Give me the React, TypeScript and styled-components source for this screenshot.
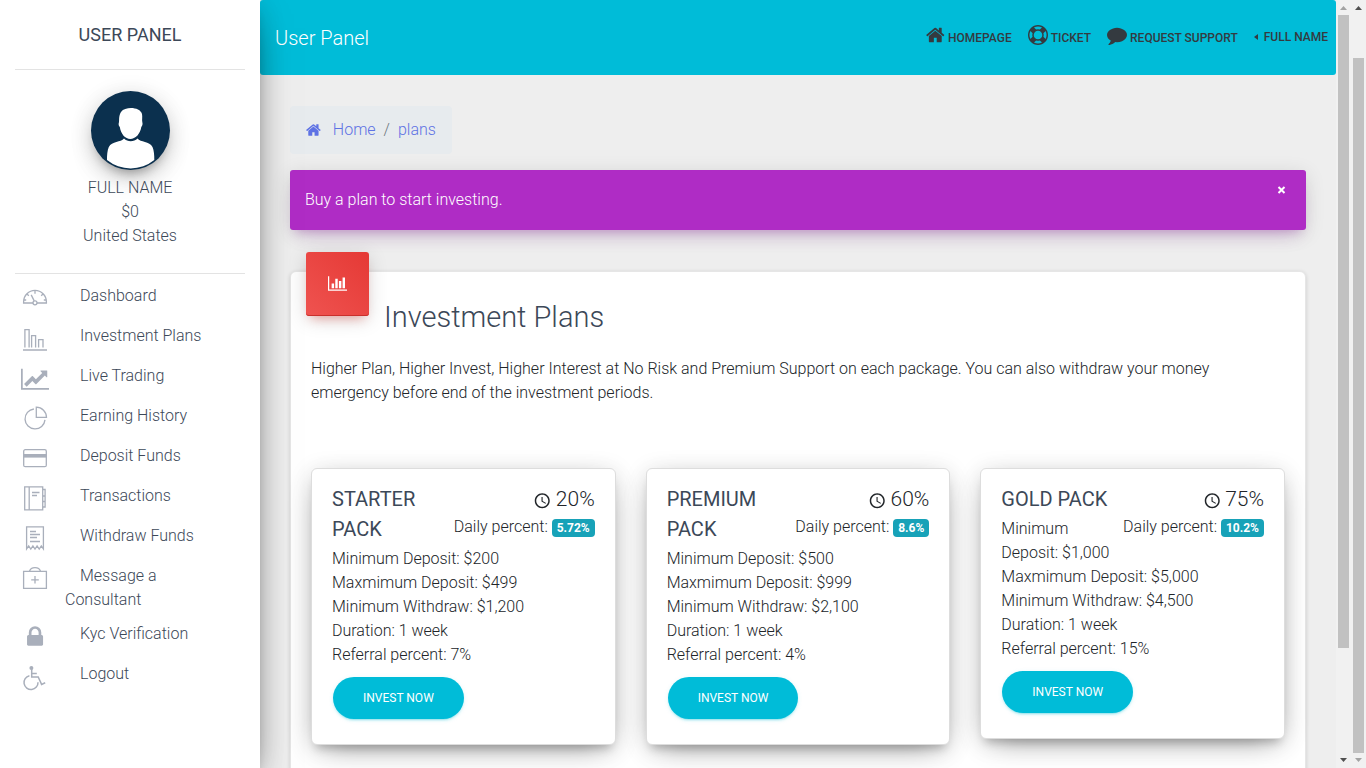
import React from 'react';
import styled, { createGlobalStyle, css } from 'styled-components';

const GlobalStyle = createGlobalStyle`
  *, *::before, *::after { box-sizing: border-box; }
  html, body, #root { height: 100%; }
  body {
    margin: 0;
    overflow: hidden;
    font-family: Roboto, "Liberation Sans", sans-serif;
    font-size: 16px;
    font-weight: 300;
    line-height: 24px;
    color: #212529;
    background: #eee;
  }
  a { text-decoration: none; color: inherit; }
  h1, h2, h3, p, ul, ol { margin: 0; padding: 0; font-weight: inherit; }
  ul, ol { list-style: none; }
`;

const deepShadow = css`
  box-shadow: 0 16px 38px -12px rgba(0, 0, 0, 0.56),
    0 4px 25px 0 rgba(0, 0, 0, 0.12),
    0 8px 10px -5px rgba(0, 0, 0, 0.2);
`;

const raisedShadow = css`
  box-shadow: 0 10px 30px -12px rgba(0, 0, 0, 0.42),
    0 4px 25px 0 rgba(0, 0, 0, 0.12),
    0 8px 10px -5px rgba(0, 0, 0, 0.2);
`;

const Shell = styled.div`
  display: flex;
  height: 100vh;
  overflow: hidden;
`;

const Sidebar = styled.aside`
  position: relative;
  z-index: 2;
  flex: 0 0 260px;
  padding: 0 15px;
  background: #fff;
  color: #3c4858;
  ${deepShadow}
`;

const Brand = styled.a`
  display: block;
  padding: 20px 0;
  height: 70px;
  border-bottom: 1px solid #e3e3e3;
  text-align: center;
  font-size: 18px;
  line-height: 30px;
  font-weight: 400;
  text-transform: uppercase;
`;

const Profile = styled.div`
  display: flex;
  flex-direction: column;
  align-items: center;
  height: 204px;
  padding-top: 21px;
  border-bottom: 1px solid #e3e3e3;
`;

const Avatar = styled.div`
  width: 79px;
  height: 79px;
  margin-bottom: 6px;
  border-radius: 50%;
  overflow: hidden;
  background: #0b304e;
  ${raisedShadow}
  svg { display: block; width: 100%; height: 100%; }
`;

const Menu = styled.ul`
  padding-top: 5px;
`;

const MenuLink = styled.a`
  display: flex;
  min-height: 40px;
  padding: 5px 30px 5px 5px;
`;

const MenuIcon = styled.svg`
  flex: none;
  width: 30px;
  height: 30px;
  margin-right: 15px;
  fill: none;
  stroke: #a9afbb;
  stroke-width: 1.3;
  .solid { fill: #a9afbb; stroke: none; }
`;

const MenuText = styled.span`
  text-indent: 15px;
`;

const Main = styled.main`
  flex: 1;
  min-width: 0;
  height: 100%;
  overflow: hidden;
`;

const Topbar = styled.header`
  display: flex;
  align-items: center;
  justify-content: space-between;
  height: 75px;
  padding: 0 8px 0 15px;
  border-radius: 3px;
  background: #00bcd8;
`;

const TopTitle = styled.a`
  font-size: 20px;
  color: #fff;
`;

const TopNav = styled.nav`
  display: flex;
  gap: 16px;
  color: #343a40;
`;

const TopLink = styled.a`
  display: flex;
  align-items: center;
  gap: 3px;
  font-size: 12px;
  font-weight: 500;
  text-transform: uppercase;
`;

const UserLink = styled(TopLink)`
  gap: 4px;
  padding-bottom: 2px;
`;

const Glyph = styled.svg<{ $size: number }>`
  display: block;
  flex: none;
  height: ${(p) => p.$size}px;
  fill: currentColor;
`;

const TopGlyph = styled(Glyph)`
  margin-bottom: 6px;
`;

const Content = styled.div`
  padding: 31px 30px 0;
`;

const Breadcrumb = styled.ol`
  display: inline-flex;
  gap: 8px;
  padding: 12px 16px;
  border-radius: 4px;
  background: #e7ebee;
  color: #6c757d;
  vertical-align: top;
  a { color: #5e72e4; display: flex; align-items: center; gap: 12px; }
`;

const Alert = styled.div`
  display: flex;
  justify-content: space-between;
  margin-top: 16px;
  padding: 18px 20px 18px 15px;
  border-radius: 3px;
  background: #af2cc5;
  color: #fff;
  box-shadow: 0 12px 20px -10px rgba(156, 39, 176, 0.28),
    0 4px 20px 0 rgba(0, 0, 0, 0.12),
    0 7px 8px -5px rgba(156, 39, 176, 0.2);
`;

const CloseButton = styled.button`
  align-self: flex-start;
  margin-top: -6px;
  padding: 0;
  width: 9px;
  height: 16px;
  border: 0;
  background: none;
  color: #fff;
  svg { display: block; width: 9px; height: 16px; stroke: currentColor; stroke-width: 2; }
`;

const Panel = styled.section`
  margin-top: 41px;
  padding: 0 20px 60px;
  border: 1px solid #e6e6e6;
  border-radius: 6px;
  background: #fff;
  box-shadow: 0 1px 4px 0 rgba(0, 0, 0, 0.14);
`;

const PanelHead = styled.div`
  display: flex;
  margin-left: -5px;
  height: 85px;
`;

const IconTile = styled.div`
  display: flex;
  align-items: center;
  justify-content: center;
  width: 63px;
  height: 64px;
  margin-top: -20px;
  margin-right: 15px;
  padding-bottom: 2px;
  border-radius: 3px;
  color: #fff;
  background: linear-gradient(45deg, #ef5350, #e53935);
  box-shadow: inset 0 -1px 0 #c9302c, 0 4px 20px 0 rgba(0, 0, 0, 0.14),
    0 7px 10px -5px rgba(244, 67, 54, 0.4);
`;

const PanelTitle = styled.h1`
  padding-top: 25px;
  font-size: 29px;
  line-height: 40px;
  color: #3c4858;
`;

const Plans = styled.div`
  display: grid;
  grid-template-columns: repeat(3, 1fr);
  align-items: start;
  gap: 30px;
  margin-top: 63px;
`;

const PlanCard = styled.article`
  padding: 15px 20px 25px;
  border: 1px solid #ddd;
  border-radius: 6px;
  background: #fff;
  ${raisedShadow}
`;

const PlanRate = styled.div`
  float: right;
  text-align: right;
`;

const Interest = styled.div`
  display: flex;
  align-items: center;
  justify-content: flex-end;
  gap: 5px;
  margin-bottom: 1px;
  font-size: 21px;
  line-height: 30px;
  svg { margin-top: 2px; }
`;

const Badge = styled.span`
  display: inline-block;
  padding: 3px 5px;
  border-radius: 4px;
  background: #17a2b8;
  color: #fff;
  font-size: 12px;
  line-height: 12px;
  font-weight: 700;
`;

const PlanName = styled.h2`
  margin-bottom: 3px;
  font-size: 20px;
  line-height: 30px;
  font-weight: 400;
  color: #3c4858;
`;

const InvestButton = styled.button`
  display: block;
  height: 42px;
  margin: 10px 1px 0;
  padding: 0 30px;
  border: 0;
  border-radius: 30px;
  background: #00bcd8;
  color: #fff;
  font: 400 12px/18px Roboto, "Liberation Sans", sans-serif;
  text-transform: uppercase;
  box-shadow: 0 2px 2px 0 rgba(0, 188, 212, 0.14),
    0 3px 1px -2px rgba(0, 188, 212, 0.2),
    0 1px 5px 0 rgba(0, 188, 212, 0.12);
`;

const Scroll = styled.div`
  display: flex;
  flex: 0 0 15px;
  flex-direction: column;
  align-items: center;
  background: #f1f1f1;
`;

const ScrollArrow = styled.svg<{ $active: boolean }>`
  flex: none;
  width: 15px;
  height: 15px;
  fill: ${(p) => (p.$active ? '#505050' : '#a3a3a3')};
`;

const ScrollTrack = styled.div`
  display: flex;
  flex-direction: column;
  flex: 1;
  width: 11px;
`;

const ScrollSpace = styled.div<{ $part: number }>`
  flex: ${(p) => p.$part} 0 0;
`;

const ScrollThumb = styled.div<{ $part: number }>`
  flex: ${(p) => p.$part} 0 0;
  background: #c1c1c1;
`;

const HOME =
  'M1472 992v480q0 26-19 45t-45 19h-384v-384H768v384H384q-26 0-45-19t-19-45V992q0-1 .5-3t.5-3l575-474 575 474q1 2 1 6zm223-69l-62 74q-8 9-21 11h-3q-13 0-21-7L896 424l-692 577q-12 8-24 7-13-2-21-11l-62-74q-8-10-7-23.5t11-21.5l719-599q32-26 76-26t76 26l244 204V288q0-14 9-23t23-9h192q14 0 23 9t9 23v408l219 182q10 8 11 21.5t-7 23.5z';
const RING =
  'M896 0q182 0 348 71t286 191 191 286 71 348-71 348-191 286-286 191-348 71-348-71-286-191-191-286T0 896t71-348 191-286T548 71 896 0zm0 128q-190 0-361 90l194 194q82-28 167-28t167 28l194-194q-171-90-361-90zM218 1257l194-194q-28-82-28-167t28-167L218 535q-90 171-90 361t90 361zm678 407q190 0 361-90l-194-194q-82 28-167 28t-167-28l-194 194q171 90 361 90zm0-384q159 0 271.5-112.5T1280 896t-112.5-271.5T896 512 624.5 624.5 512 896t112.5 271.5T896 1280zm484-217l194 194q90-171 90-361t-90-361l-194 194q28 82 28 167t-28 167z';
const COMMENT =
  'M1792 896q0 174-120 321.5t-326 233-450 85.5q-70 0-145-8-198 175-460 242-49 14-114 22-17 2-30.5-9T129 1754v-1q-3-4-.5-12t2-10 4.5-9.5l6-9 7-8.5 8-9q7-8 31-34.5t34.5-38 31-39.5 32.5-51 27-59 26-76q-157-89-247.5-220T0 896q0-130 71-248.5T262 443t286-136.5T896 256t348 50.5T1530 443t191 204.5 71 248.5z';
const BARS =
  'M640 896v512H384V896h256zm384-512v1024H768V384h256zm1024 1152v128H0V128h128v1408h1920zm-640-896v768h-256V640h256zm384-384v1152h-256V256h256z';

const menu = [
  {
    label: 'Dashboard',
    icon: (
      <>
        <path d="M13 19H3.6v-1.2a11.4 11.4 0 0 1 22.8 0V19H17" />
        <circle cx="15" cy="18.8" r="2" />
        <path d="M14.2 16.9l-3-6M15 6.5v3.3M7 10l1.8 1.8M23 10l-1.8 1.8M3.8 16h2.4M26.2 16h-2.4" />
      </>
    ),
  },
  {
    label: 'Investment Plans',
    icon: <path d="M3 26h24M4.9 23.6V5.6h4.2v18M11.6 23.6V11.6h4v12M18.6 23.6v-8h4.4v8" />,
  },
  {
    label: 'Live Trading',
    icon: (
      <path
        className="solid"
        transform="translate(1 3) scale(.01367)"
        d="M2048 1536v128H0V128h128v1408h1920zM1920 288v435q0 21-19.5 29.5T1865 745l-121-121-633 633q-10 10-23 10t-23-10L832 1024l-416 416-192-192 585-585q10-10 23-10t23 10l233 233 464-464-121-121q-16-16-7.5-35.5T1453 256h435q14 0 23 9t9 23z"
      />
    ),
  },
  {
    label: 'Earning History',
    icon: <path d="M13.9 5A10 10 0 1 0 25 15.9M16.3 3.2v10.2h10.2A10.2 10.2 0 0 0 16.3 3.2z" />,
  },
  {
    label: 'Deposit Funds',
    icon: (
      <>
        <rect x="3.7" y="5.7" width="22.6" height="17" rx="1.5" />
        <path className="solid" d="M3.5 10h23v3.6h-23z" />
      </>
    ),
  },
  {
    label: 'Transactions',
    icon: (
      <path d="M4.7 2.8h18v23h-18zM9.2 2.8v23M12 8.5h7.5M12 11.5h5M22.7 5.5h2.4V12h-2.4M25.1 12v5.5h-2.4M25.1 17.5V23h-2.4" />
    ),
  },
  {
    label: 'Withdraw Funds',
    icon: (
      <path d="M6.6 25V2.9h16.8V25l-2.1-3-2.1 3-2.1-3-2.1 3-2.1-3-2.1 3-2.1-3zM10 7.5h6M10 10.5h10M10 13.5h7M10 17.5h10" />
    ),
  },
  {
    label: 'Message a Consultant',
    icon: <path d="M3.6 7.4h22.8v17H3.6zM9.3 7.4c.8-2.4 3-3.8 5.7-3.8s4.9 1.4 5.7 3.8M15 12v7.6M11.2 15.8h7.6" />,
  },
  {
    label: 'Kyc Verification',
    icon: (
      <path
        className="solid"
        transform="translate(2.6 2.4) scale(.0139)"
        d="M640 768h512V576q0-106-75-181t-181-75-181 75-75 181v192zm832 96v576q0 40-28 68t-68 28H416q-40 0-68-28t-28-68V864q0-40 28-68t68-28h32V576q0-184 132-316t316-132 316 132 132 316v192h32q40 0 68 28t28 68z"
      />
    ),
  },
  {
    label: 'Logout',
    icon: (
      <>
        <circle className="solid" cx="11.4" cy="6" r="2" />
        <path
          strokeWidth="1.5"
          d="M11.7 7v8h6.5l3.4 7.4 3.6-1.6M11.8 11.6h5M9.4 13.7a7 7 0 1 0 8.6 6.5"
        />
      </>
    ),
  },
];

const plans = [
  { name: 'STARTER PACK', interest: '20%', daily: '5.72%', min: '$200', max: '$499', withdraw: '$1,200', duration: '1 week', referral: '7%' },
  { name: 'PREMIUM PACK', interest: '60%', daily: '8.6%', min: '$500', max: '$999', withdraw: '$2,100', duration: '1 week', referral: '4%' },
  { name: 'GOLD PACK', interest: '75%', daily: '10.2%', min: '$1,000', max: '$5,000', withdraw: '$4,500', duration: '1 week', referral: '15%' },
];

type ScrollbarProps = { before: number; thumb: number; after: number };

function Scrollbar({ before, thumb, after }: ScrollbarProps) {
  return (
    <Scroll aria-hidden="true">
      <ScrollArrow viewBox="0 0 15 15" $active={before > 0}>
        <path d="M4 10l3.5-4L11 10z" />
      </ScrollArrow>
      <ScrollTrack>
        <ScrollSpace $part={before} />
        <ScrollThumb $part={thumb} />
        <ScrollSpace $part={after} />
      </ScrollTrack>
      <ScrollArrow viewBox="0 0 15 15" $active={after > 0}>
        <path d="M4 5l3.5 4L11 5z" />
      </ScrollArrow>
    </Scroll>
  );
}

export default function App() {
  return (
    <>
      <GlobalStyle />
      <Shell>
        <Sidebar>
          <Brand href="#">User Panel</Brand>
          <Profile>
            <Avatar>
              <svg viewBox="0 0 79 79" fill="#fff" aria-hidden="true">
                <path d="M30 21c2-3 6-4 10-4 5 0 10 2 11 6 .6 3-.2 6 .3 8 .6 2 0 4-1 5-1 7-6 12-11 12s-9.500-5-10.500-12c-1.200-1-1.500-3-.8-5 .4-2-.5-6 2-10z" />
                <path d="M33 47.500c3.500 3.500 10 3.500 13.500 0 3 4 12 2.500 15 8.500 1.500 3.500 1.800 8 1.800 13a37.500 37.500 0 0 1-47.300 0c0-5 .3-9.500 1.800-13 3-6 12.200-4.500 15.200-8.500z" />
              </svg>
            </Avatar>
            <span>FULL NAME</span>
            <span>$0</span>
            <span>United States</span>
          </Profile>
          <Menu>
            {menu.map((item) => (
              <li key={item.label}>
                <MenuLink href="#">
                  <MenuIcon viewBox="0 0 30 30" aria-hidden="true">{item.icon}</MenuIcon>
                  <MenuText>{item.label}</MenuText>
                </MenuLink>
              </li>
            ))}
          </Menu>
        </Sidebar>
        <Main>
          <Topbar>
            <TopTitle href="#">User Panel</TopTitle>
            <TopNav>
              <TopLink href="#">
                <TopGlyph $size={20} viewBox="64 0 1664 1792"><path d={HOME} /></TopGlyph>
                Homepage
              </TopLink>
              <TopLink href="#">
                <TopGlyph $size={20} viewBox="0 0 1792 1792"><path d={RING} /></TopGlyph>
                Ticket
              </TopLink>
              <TopLink href="#">
                <TopGlyph $size={20} viewBox="0 0 1792 1792"><path d={COMMENT} /></TopGlyph>
                Request Support
              </TopLink>
              <UserLink href="#">
                <Glyph $size={6} viewBox="0 0 6 6"><path d="M4 0v6L0 3z" /></Glyph>
                Full Name
              </UserLink>
            </TopNav>
          </Topbar>
          <Content>
            <Breadcrumb>
              <li>
                <a href="#">
                  <Glyph $size={16} viewBox="64 0 1664 1792"><path d={HOME} /></Glyph>
                  Home
                </a>
              </li>
              <li aria-hidden="true">/</li>
              <li><a href="#">plans</a></li>
            </Breadcrumb>
            <Alert role="alert">
              Buy a plan to start investing.
              <CloseButton type="button" aria-label="Close">
                <svg viewBox="0 0 9 16"><path d="M1.5 5l6 6M7.5 5l-6 6" /></svg>
              </CloseButton>
            </Alert>
            <Panel>
              <PanelHead>
                <IconTile>
                  <Glyph $size={17} viewBox="0 0 2048 1792"><path d={BARS} /></Glyph>
                </IconTile>
                <PanelTitle>Investment Plans</PanelTitle>
              </PanelHead>
              <p>
                Higher Plan, Higher Invest, Higher Interest at No Risk and Premium Support on each
                package. You can also withdraw your money emergency before end of the investment
                periods.
              </p>
              <Plans>
                {plans.map((plan) => (
                  <PlanCard key={plan.name}>
                    <PlanRate>
                      <Interest>
                        <Glyph $size={18} viewBox="1 -1 22 24">
                          <path d="M11.99 2C6.47 2 2 6.48 2 12s4.47 10 9.99 10C17.52 22 22 17.52 22 12S17.52 2 11.99 2zM12 20c-4.42 0-8-3.58-8-8s3.58-8 8-8 8 3.58 8 8-3.58 8-8 8zm.5-13H11v6l5.25 3.15.75-1.23-4.5-2.67z" />
                        </Glyph>
                        {plan.interest}
                      </Interest>
                      Daily percent: <Badge>{plan.daily}</Badge>
                    </PlanRate>
                    <PlanName>{plan.name}</PlanName>
                    <div>Minimum Deposit: {plan.min}</div>
                    <div>Maxmimum Deposit: {plan.max}</div>
                    <div>Minimum Withdraw: {plan.withdraw}</div>
                    <div>Duration: {plan.duration}</div>
                    <div>Referral percent: {plan.referral}</div>
                    <InvestButton type="button">Invest now</InvestButton>
                  </PlanCard>
                ))}
              </Plans>
            </Panel>
          </Content>
        </Main>
        <Scrollbar before={0} thumb={633} after={105} />
        <Scrollbar before={43} thumb={695} after={0} />
      </Shell>
    </>
  );
}
